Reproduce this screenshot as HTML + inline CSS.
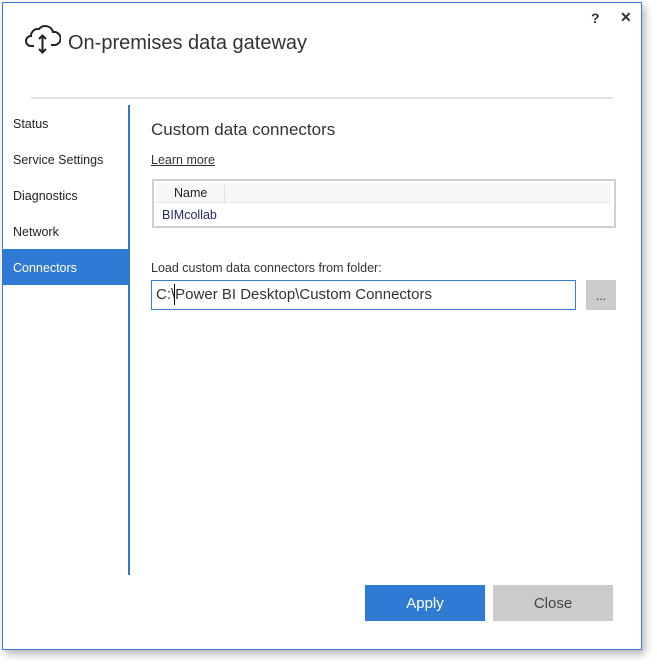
<!DOCTYPE html>
<html><head><style>
body{margin:0;width:657px;height:665px;background:#fff;position:relative;font-family:"Liberation Sans",sans-serif;overflow:hidden}
.win{position:absolute;left:2px;top:2px;width:638px;height:646px;border:1px solid #3a7bd5;background:#fff;box-shadow:3px 4px 8px rgba(0,0,0,0.3)}
.a{position:absolute;white-space:nowrap}
.nav{position:absolute;left:13px;font-size:12.5px;color:#222}
</style></head><body>
<div class="win"></div>
<svg class="a" style="left:25px;top:24px" width="36" height="32" viewBox="0 0 36 32" fill="none" stroke="#222" stroke-width="2">
<path d="M9 22 H6 A5 5 0 0 1 6 12 A7 7 0 0 1 14 5 A8 8 0 0 1 28 8 A6 6 0 0 1 30 21 H26"/>
<path d="M17.5 12 V28 M14 15 L17.5 11.5 L21 15 M14 25 L17.5 28.5 L21 25"/>
</svg>
<div class="a" style="left:68px;top:32px;font-size:20px;color:#333">On-premises data gateway</div>
<div class="a" style="left:591px;top:10px;font-size:14px;font-weight:bold;color:#333">?</div>
<div class="a" style="left:620px;top:9px;font-size:14px;font-weight:bold;color:#333">✕</div>
<div class="a" style="left:31px;top:97px;width:582px;height:2px;background:#e3e3e3"></div>
<div class="a" style="left:128px;top:105px;width:2px;height:470px;background:#2f7ad3"></div>
<div class="a" style="left:3px;top:249px;width:125px;height:36px;background:#2f7ad3"></div>
<div class="nav" style="top:117px">Status</div>
<div class="nav" style="top:153px">Service Settings</div>
<div class="nav" style="top:189px">Diagnostics</div>
<div class="nav" style="top:225px">Network</div>
<div class="nav" style="top:261px;color:#fff">Connectors</div>
<div class="a" style="left:151px;top:120px;font-size:17px;color:#333">Custom data connectors</div>
<div class="a" style="left:151px;top:153px;font-size:12.5px;color:#333;text-decoration:underline">Learn more</div>
<div class="a" style="left:152px;top:179px;width:460px;height:45px;border:2px solid #cfcfcf;background:#fff">
 <div class="a" style="left:2px;top:2px;width:454px;height:19px;background:#f7f7f7;border-bottom:1px solid #e6e6e6"></div>
 <div class="a" style="left:70px;top:4px;width:1px;height:17px;background:#e0e0e0"></div>
 <div class="a" style="left:20px;top:5px;font-size:12.5px;color:#222">Name</div>
 <div class="a" style="left:8px;top:27px;font-size:12.5px;color:#1e2a5a">BIMcollab</div>
</div>
<div class="a" style="left:151px;top:261px;font-size:12.5px;color:#333">Load custom data connectors from folder:</div>
<div class="a" style="left:151px;top:280px;width:423px;height:28px;border:1px solid #3a7bd5"></div>
<div class="a" style="left:156px;top:286px;font-size:15px;color:#333">C:\Power BI Desktop\Custom Connectors</div>
<div class="a" style="left:174px;top:284px;width:1px;height:21px;background:#000"></div>
<div class="a" style="left:586px;top:280px;width:30px;height:30px;background:#cccbca;font-size:12px;color:#333;text-align:center;line-height:32px">...</div>
<div class="a" style="left:365px;top:585px;width:120px;height:36px;background:#2f7ad3;color:#fff;font-size:15px;text-align:center;line-height:38px">Apply</div>
<div class="a" style="left:493px;top:585px;width:120px;height:36px;background:#cccbca;color:#444;font-size:15px;text-align:center;line-height:38px">Close</div>
</body></html>
